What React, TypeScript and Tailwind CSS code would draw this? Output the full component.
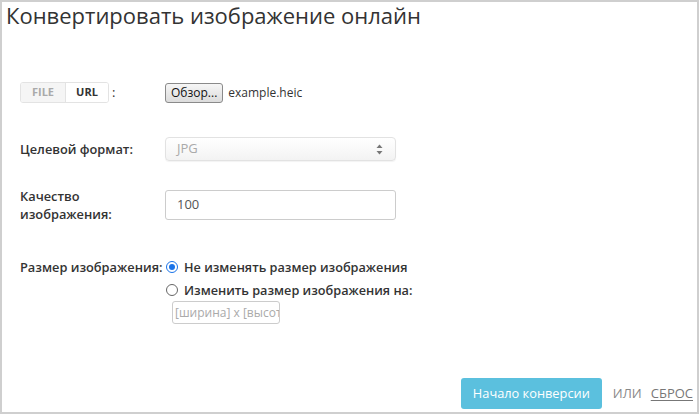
import React from "react";

const font = { fontFamily: '"Open Sans", "Noto Sans", sans-serif' };

function Label({ children }: { children: React.ReactNode }) {
  return (
    <div className="text-[12.8px] font-semibold leading-[18px] text-[#333]">
      {children}
    </div>
  );
}

function Radio({ checked, label }: { checked?: boolean; label: string }) {
  return (
    <label className="flex items-center gap-[6px] text-[12.7px] font-semibold leading-[18px] text-[#333]">
      <span
        className={`flex h-[12px] w-[12px] items-center justify-center rounded-full border ${
          checked ? "border-[#1a73e8]" : "border-[#666]"
        } bg-white`}
      >
        {checked && <span className="h-[6px] w-[6px] rounded-full bg-[#1a73e8]" />}
      </span>
      {label}
    </label>
  );
}

export default function App() {
  return (
    <div
      style={font}
      className="flex h-[414px] w-[699px] flex-col border-2 border-[#cfcfcf] bg-white"
    >
      <h1 className="ml-[4px] -mt-[2px] text-[22px] font-normal leading-[30px] text-[#333]">
        Конвертировать изображение онлайн
      </h1>

      <div className="mt-[52px] grid grid-cols-[145px_1fr] items-center px-[18px]">
        <div className="flex items-center">
          <div className="flex h-[21px] overflow-hidden rounded-[3px] border border-[#e3e3e3] text-[11px] font-bold">
            <span className="flex w-[44px] items-center justify-center bg-[#f5f5f5] text-[#aaa]">
              FILE
            </span>
            <span className="flex w-[43px] items-center justify-center border-l border-[#e3e3e3] bg-white text-[#333]">
              URL
            </span>
          </div>
          <span className="ml-[3px] text-[13px] text-[#333]">:</span>
        </div>
        <div className="flex items-center">
          <button className="h-[20px] rounded-[3px] border border-[#8a8a8a] bg-gradient-to-b from-[#f6f6f6] to-[#dcdcdc] px-[5px] text-[12px] leading-[18px] text-[#111]">
            Обзор...
          </button>
          <span className="ml-[5px] text-[12px] text-[#333]">example.heic</span>
        </div>
      </div>

      <div className="mt-[34px] grid grid-cols-[145px_1fr] items-center px-[18px]">
        <Label>Целевой формат:</Label>
        <div className="flex h-[24px] w-[231px] items-center justify-between rounded-[4px] border border-[#e2e2e2] bg-gradient-to-b from-white to-[#f3f3f3] pl-[11px] pr-[12px] shadow-[0_1px_1px_rgba(0,0,0,0.05)]">
          <span className="text-[13px] text-[#aaa]">JPG</span>
          <svg width="7" height="11" viewBox="0 0 7 11">
            <path d="M3.5 0.5 L6.5 4 L0.5 4 Z" fill="#777" />
            <path d="M3.5 10.5 L6.5 7 L0.5 7 Z" fill="#777" />
          </svg>
        </div>
      </div>

      <div className="mt-[26px] grid grid-cols-[145px_1fr] items-center px-[18px]">
        <Label>
          Качество
          <br />
          изображения:
        </Label>
        <div className="flex h-[30px] w-[231px] items-center rounded-[3px] border border-[#ccc] bg-white pl-[11px]">
          <span className="text-[13px] text-[#555]">100</span>
        </div>
      </div>

      <div className="mt-[35px] grid grid-cols-[145px_1fr] items-start px-[18px]">
        <Label>Размер изображения:</Label>
        <div className="flex flex-col pl-[1px]">
          <Radio checked label="Не изменять размер изображения" />
          <div className="mt-[5px]">
            <Radio label="Изменить размер изображения на:" />
          </div>
          <input
            readOnly
            placeholder="[ширина] x [высота]"
            className="ml-[6px] mt-[2px] h-[23px] w-[108px] rounded-[3px] border border-[#ccc] pl-[2px] text-[12px] text-[#555] outline-none placeholder:text-[#aaa]"
          />
        </div>
      </div>

      <div className="mt-auto mb-[3px] flex items-center justify-end pr-[4px]">
        <button className="h-[31px] w-[141px] rounded-[3px] bg-[#5bc0de] text-[12.8px] text-white">
          Начало конверсии
        </button>
        <span className="ml-[11px] text-[13px] text-[#888]">ИЛИ</span>
        <span className="ml-[9px] text-[13px] text-[#777] underline underline-offset-2">
          СБРОС
        </span>
      </div>
    </div>
  );
}
